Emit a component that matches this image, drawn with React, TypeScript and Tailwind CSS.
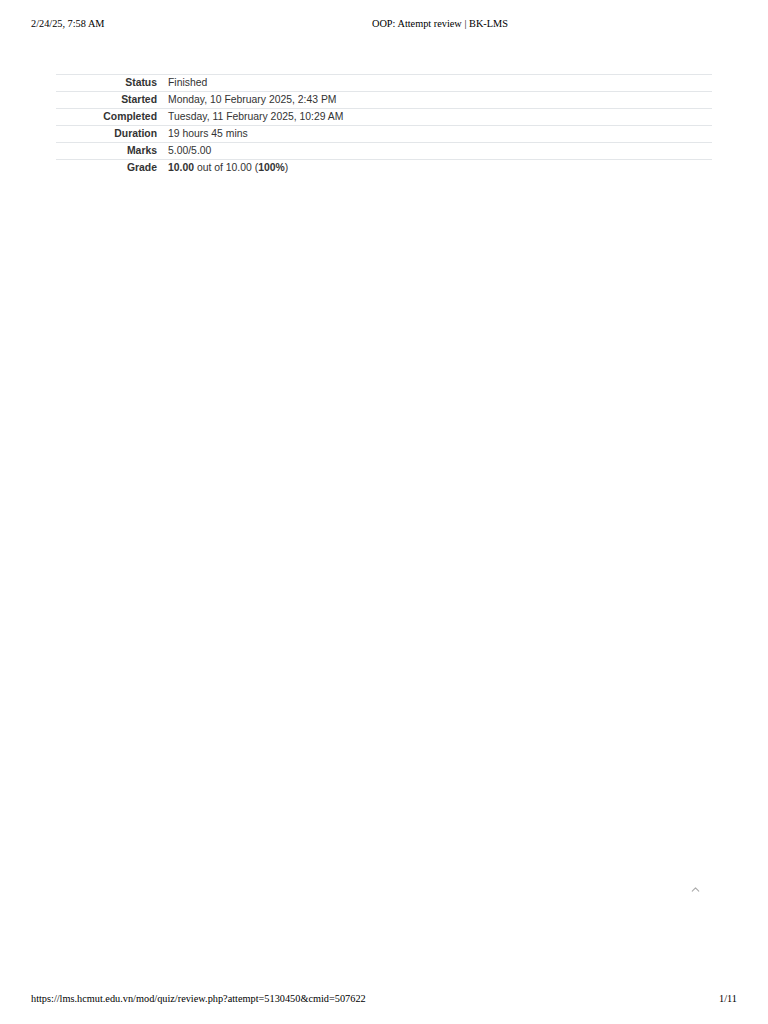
import { ChevronUp } from "lucide-react";

const rows = [
  { label: "Status", value: <>Finished</> },
  { label: "Started", value: <>Monday, 10 February 2025, 2:43 PM</> },
  { label: "Completed", value: <>Tuesday, 11 February 2025, 10:29 AM</> },
  { label: "Duration", value: <>19 hours 45 mins</> },
  { label: "Marks", value: <>5.00/5.00</> },
  {
    label: "Grade",
    value: (
      <>
        <b>10.00</b> out of 10.00 (<b>100%</b>)
      </>
    ),
  },
];

export default function App() {
  return (
    <div className="w-[768px] h-[1024px] bg-white flex flex-col relative overflow-hidden">
      <div
        className="flex pt-[18px] px-[31px] text-[10.3px] leading-[12px] text-black"
        style={{ fontFamily: '"Liberation Serif", serif' }}
      >
        <span className="w-[341px]">2/24/25, 7:58 AM</span>
        <span>OOP: Attempt review | BK-LMS</span>
      </div>

      <div
        className="mt-[44px] mx-[56px] text-[10.4px] text-[#333]"
        style={{ fontFamily: '"Liberation Sans", Arial, sans-serif' }}
      >
        {rows.map((r) => (
          <div key={r.label} className="flex h-[17px] items-center border-t border-[#e3e6e9]">
            <div className="w-[101px] text-right font-bold">{r.label}</div>
            <div className="pl-[11px]">{r.value}</div>
          </div>
        ))}
      </div>

      <div className="flex-1 relative">
        <ChevronUp
          className="absolute left-[689px] top-[707px] w-[13px] h-[13px] text-[#aaaaaa]"
          strokeWidth={2}
        />
      </div>

      <div
        className="flex justify-between px-[31px] pb-[19px] text-[10.3px] leading-[12px] text-black"
        style={{ fontFamily: '"Liberation Serif", serif' }}
      >
        <span>https://lms.hcmut.edu.vn/mod/quiz/review.php?attempt=5130450&amp;cmid=507622</span>
        <span>1/11</span>
      </div>
    </div>
  );
}
